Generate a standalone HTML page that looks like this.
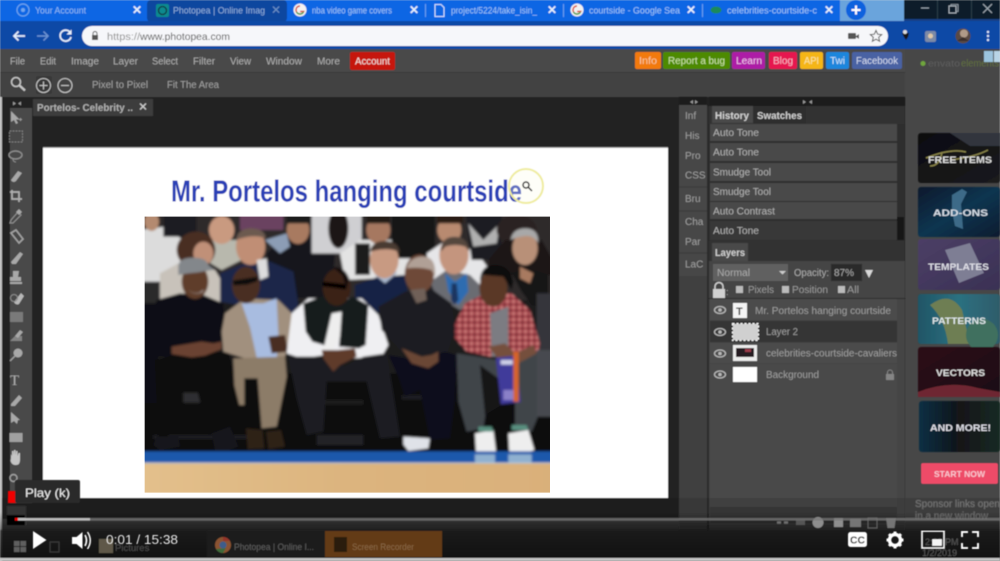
<!DOCTYPE html>
<html><head><meta charset="utf-8"><style>
html,body{margin:0;padding:0;background:#ddd;width:1000px;height:561px;overflow:hidden}
svg{display:block;font-family:"Liberation Sans",sans-serif}
</style></head><body>
<svg xmlns="http://www.w3.org/2000/svg" width="1000" height="561" viewBox="0 0 1000 561">
<defs>
<filter id="b" x="-2%" y="-2%" width="104%" height="104%"><feGaussianBlur stdDeviation="0.55"/></filter>
<filter id="p" x="-2%" y="-2%" width="104%" height="104%"><feGaussianBlur stdDeviation="4"/></filter>
<linearGradient id="fade" x1="0" y1="0" x2="0" y2="1"><stop offset="0" stop-color="#000" stop-opacity="0"/><stop offset=".4" stop-color="#000" stop-opacity=".5"/><stop offset="1" stop-color="#000" stop-opacity=".85"/></linearGradient>
<linearGradient id="floor" x1="0" y1="0" x2="1" y2="0"><stop offset="0" stop-color="#e3c08c"/><stop offset=".5" stop-color="#dcb47e"/><stop offset="1" stop-color="#d9b07a"/></linearGradient>
<linearGradient id="a1" x1="0" y1="0" x2="1" y2="1"><stop offset="0" stop-color="#0d0d10"/><stop offset="1" stop-color="#1b1b1e"/></linearGradient>
<linearGradient id="a2" x1="0" y1="0" x2="1" y2="1"><stop offset="0" stop-color="#08192c"/><stop offset=".5" stop-color="#0d3550"/><stop offset="1" stop-color="#0a1c2f"/></linearGradient>
<linearGradient id="a3" x1="0" y1="0" x2="1" y2="1"><stop offset="0" stop-color="#4c3f66"/><stop offset="1" stop-color="#3a3154"/></linearGradient>
<linearGradient id="a4" x1="0" y1="0" x2="1" y2="0"><stop offset="0" stop-color="#1f5566"/><stop offset=".5" stop-color="#2c7080"/><stop offset="1" stop-color="#2f5c6a"/></linearGradient>
<linearGradient id="a5" x1="0" y1="0" x2="1" y2="1"><stop offset="0" stop-color="#2d0e14"/><stop offset="1" stop-color="#1c1014"/></linearGradient>
<linearGradient id="a6" x1="0" y1="0" x2="1" y2="0"><stop offset="0" stop-color="#0e2f44"/><stop offset=".5" stop-color="#121418"/><stop offset="1" stop-color="#132a24"/></linearGradient>
<pattern id="chk" width="18" height="18" patternUnits="userSpaceOnUse"><rect width="18" height="18" fill="#a8464e"/><rect width="9" height="9" fill="#c97a78"/><rect x="9" y="9" width="9" height="9" fill="#7c2f38"/></pattern>
</defs>
<g filter="url(#b)">
<rect width="1000" height="561" fill="#454545"/>
<!-- tab strip -->
<rect x="0" y="0" width="904" height="22" fill="#0b66e4"/>
<rect x="840" y="0" width="64" height="22" fill="#6ba4dc"/>
<rect x="147" y="0" width="140" height="22" rx="4" fill="#0c479f"/>
<rect x="904" y="0" width="96" height="22" fill="#123f85"/>
<rect x="904" y="0" width="96" height="19" fill="#0f1d2c"/>
<circle cx="23" cy="10" r="6" fill="none" stroke="#6fa6ee" stroke-width="1.200"/><circle cx="23" cy="10" r="2" fill="#6fa6ee"/>
<text x="35" y="13.500" font-size="9.500" fill="#8fbcf4" textLength="51" lengthAdjust="spacingAndGlyphs">Your Account</text>
<text x="132" y="14" font-size="12" font-weight="bold" fill="#e8f1fc">✕</text>
<rect x="156" y="4" width="13" height="13" rx="2" fill="#0b8a8e"/><circle cx="162.500" cy="10.500" r="4" fill="none" stroke="#12343f" stroke-width="1.300"/>
<text x="173" y="13.500" font-size="9.500" fill="#8fb0dc" textLength="92" lengthAdjust="spacingAndGlyphs">Photopea | Online Imag</text>
<text x="271" y="14" font-size="12" fill="#6a90c4">✕</text>
<circle cx="300" cy="10" r="6.500" fill="#f2f2f2"/><path d="M300 6a4 4 0 1 0 3.700 5.500h-3.500" fill="none" stroke="#d9503f" stroke-width="1.500"/><path d="M296.500 12a4 4 0 0 0 7 0" fill="none" stroke="#3aa757" stroke-width="1.300"/>
<text x="312" y="13.500" font-size="9.500" fill="#a0c8f8" textLength="80" lengthAdjust="spacingAndGlyphs">nba video game covers</text>
<text x="409" y="14" font-size="12" font-weight="bold" fill="#e8f1fc">✕</text>
<rect x="425" y="4" width="1" height="13" fill="#6aa2ee"/>
<path d="M435 4.500h6l3 3v9h-9z" fill="none" stroke="#cfe2fb" stroke-width="1.100"/>
<text x="451" y="13.500" font-size="9.500" fill="#a0c8f8" textLength="86" lengthAdjust="spacingAndGlyphs">project/5224/take_isin_</text>
<text x="547" y="14" font-size="12" font-weight="bold" fill="#e8f1fc">✕</text>
<rect x="563" y="4" width="1" height="13" fill="#6aa2ee"/>
<circle cx="577" cy="10" r="6.500" fill="#f2f2f2"/><path d="M577 6a4 4 0 1 0 3.700 5.500h-3.500" fill="none" stroke="#d9503f" stroke-width="1.500"/><path d="M573.500 12a4 4 0 0 0 7 0" fill="none" stroke="#3aa757" stroke-width="1.300"/>
<text x="589" y="13.500" font-size="9.500" fill="#a0c8f8" textLength="91" lengthAdjust="spacingAndGlyphs">courtside - Google Sea</text>
<text x="686" y="14" font-size="12" font-weight="bold" fill="#e8f1fc">✕</text>
<rect x="702" y="4" width="1" height="13" fill="#6aa2ee"/>
<ellipse cx="716" cy="10" rx="5.500" ry="3.500" fill="#1f8a5a"/>
<text x="727" y="13.500" font-size="9.500" fill="#a0c8f8" textLength="90" lengthAdjust="spacingAndGlyphs">celebrities-courtside-c</text>
<text x="824" y="14" font-size="12" font-weight="bold" fill="#e8f1fc">✕</text>
<circle cx="856" cy="10" r="10" fill="#0e62de"/><path d="M856 5.500v9M851.500 10h9" stroke="#fff" stroke-width="2"/>
<rect x="921" y="7.500" width="8" height="1" fill="#9aa5b0"/>
<rect x="949" y="6" width="7" height="7" fill="none" stroke="#a5afb8"/><path d="M951 6v-1.500h7v7h-2" fill="none" stroke="#a5afb8" stroke-width=".8"/>
<path d="M983 4l9 9M992 4l-9 9" stroke="#a5afb8" stroke-width="1"/>
<rect x="937" y="0" width="1" height="19" fill="#2a3a4a"/><rect x="971" y="0" width="1" height="19" fill="#2a3a4a"/>
<!-- toolbar -->
<rect x="0" y="21" width="1000" height="29" fill="#0f48a6"/>
<path d="M25 36H14M18.500 31.500L14 36l4.500 4.500" fill="none" stroke="#e6effc" stroke-width="1.700"/>
<path d="M37 36h11M43.500 31.500L48 36l-4.500 4.500" fill="none" stroke="#6c93d1" stroke-width="1.500"/>
<path d="M70.500 33a5.500 5.500 0 1 0 .5 4" fill="none" stroke="#e6effc" stroke-width="1.700"/><path d="M71.500 29.500v5h-5z" fill="#e6effc"/>
<rect x="82" y="26" width="806" height="20" rx="10" fill="#f6f7fa"/>
<rect x="92" y="35" width="6" height="5" fill="#555"/><path d="M93 35v-1.500a2 2 0 0 1 4 0V35" fill="none" stroke="#555"/>
<text x="107" y="40" font-size="10.500" fill="#8d8d8d" textLength="33" lengthAdjust="spacingAndGlyphs">https://</text>
<text x="140" y="40" font-size="10.500" fill="#555" textLength="90" lengthAdjust="spacingAndGlyphs">www.photopea.com</text>
<rect x="848" y="33" width="8" height="6" rx="1" fill="#555"/><path d="M856 36l3-2v5l-3-2z" fill="#555"/>
<path d="M876 30.500l1.700 3.700 4 .4-3 2.700.9 4-3.600-2.100-3.600 2.100.9-4-3-2.700 4-.4z" fill="none" stroke="#555"/>
<path d="M902 33h7l-1 4-2 3-2-3z" fill="#141414"/><circle cx="905" cy="32" r="2" fill="#ddd"/>
<rect x="925" y="31" width="11" height="11" rx="2" fill="#7c8aa6"/><circle cx="930.500" cy="36" r="2.500" fill="#dfc8a8"/>
<circle cx="963" cy="36" r="7.500" fill="#5a4a42"/><circle cx="964" cy="33.500" r="4" fill="#b09a88"/><path d="M957 41l6-4 6 4z" fill="#3a2e2a"/>
<circle cx="988" cy="32" r="1.200" fill="#dfeafa"/><circle cx="988" cy="36" r="1.200" fill="#dfeafa"/><circle cx="988" cy="40" r="1.200" fill="#dfeafa"/>
<!-- menu bar -->
<rect x="0" y="49" width="905" height="23" fill="#494949"/>
<rect x="0" y="72" width="905" height="1" fill="#393939"/>
<rect x="0" y="73" width="905" height="24" fill="#434343"/>
<rect x="905" y="49" width="95" height="470" fill="#474747"/>
<g font-size="10" fill="#b0b0b0">
<text x="10" y="64.500" textLength="15" lengthAdjust="spacingAndGlyphs">File</text>
<text x="40" y="64.500" textLength="16" lengthAdjust="spacingAndGlyphs">Edit</text>
<text x="71" y="64.500" textLength="28" lengthAdjust="spacingAndGlyphs">Image</text>
<text x="113" y="64.500" textLength="25" lengthAdjust="spacingAndGlyphs">Layer</text>
<text x="152" y="64.500" textLength="26" lengthAdjust="spacingAndGlyphs">Select</text>
<text x="193" y="64.500" textLength="22" lengthAdjust="spacingAndGlyphs">Filter</text>
<text x="230" y="64.500" textLength="21" lengthAdjust="spacingAndGlyphs">View</text>
<text x="266" y="64.500" textLength="36" lengthAdjust="spacingAndGlyphs">Window</text>
<text x="317" y="64.500" textLength="23" lengthAdjust="spacingAndGlyphs">More</text>
</g>
<rect x="350" y="52" width="45" height="18" rx="2" fill="#c6170d"/>
<text x="355" y="64.500" font-size="10" fill="#f4e4e0" textLength="35" lengthAdjust="spacingAndGlyphs">Account</text>
<g font-size="10">
<rect x="635" y="52" width="26" height="17" rx="2" fill="#f27a0c"/><text x="639" y="64" fill="#f7c9a0" textLength="18" lengthAdjust="spacingAndGlyphs">Info</text>
<rect x="663" y="52" width="67" height="17" rx="2" fill="#4d8a06"/><text x="668" y="64" fill="#cfe6a8" textLength="57" lengthAdjust="spacingAndGlyphs">Report a bug</text>
<rect x="732" y="52" width="33" height="17" rx="2" fill="#ad1ba6"/><text x="736" y="64" fill="#f2c8ee" textLength="26" lengthAdjust="spacingAndGlyphs">Learn</text>
<rect x="769" y="52" width="28" height="17" rx="2" fill="#e6174f"/><text x="773" y="64" fill="#f7b8c8" textLength="20" lengthAdjust="spacingAndGlyphs">Blog</text>
<rect x="800" y="52" width="23" height="17" rx="2" fill="#f5b614"/><text x="804" y="64" fill="#fbe7a8" textLength="15" lengthAdjust="spacingAndGlyphs">API</text>
<rect x="826" y="52" width="23" height="17" rx="2" fill="#1d86dc"/><text x="830" y="64" fill="#d2e8fa" textLength="15" lengthAdjust="spacingAndGlyphs">Twi</text>
<rect x="852" y="52" width="50" height="17" rx="2" fill="#4a62a3"/><text x="856" y="64" fill="#d5dcf0" textLength="42" lengthAdjust="spacingAndGlyphs">Facebook</text>
</g>
<circle cx="923" cy="63.500" r="2.500" fill="#6fa53c"/>
<text x="928" y="66.500" font-size="9.500" fill="#5e5e5e" textLength="32" lengthAdjust="spacingAndGlyphs">envato</text>
<text x="961" y="66.500" font-size="10" fill="#62703f" textLength="38" lengthAdjust="spacingAndGlyphs">elements</text>
<rect x="984" y="51" width="9" height="11" fill="#9cc4de"/><rect x="994" y="51" width="6" height="11" fill="#b8d4e6"/>
<!-- zoom toolbar -->
<circle cx="16" cy="82" r="4.500" fill="none" stroke="#c4c4c4" stroke-width="1.500"/><path d="M19.500 85.500l5.500 5" stroke="#c4c4c4" stroke-width="2.200"/>
<rect x="36" y="76" width="16" height="18" rx="2" fill="#383838"/>
<circle cx="43.500" cy="85.500" r="7" fill="none" stroke="#c4c4c4" stroke-width="1.100"/><path d="M43.500 81.500v8M39.500 85.500h8" stroke="#c4c4c4" stroke-width="1.100"/>
<circle cx="65" cy="85.500" r="7" fill="none" stroke="#c4c4c4" stroke-width="1.100"/><path d="M61 85.500h8" stroke="#c4c4c4" stroke-width="1.100"/>
<text x="92" y="88" font-size="10" fill="#a0a0a0" textLength="56" lengthAdjust="spacingAndGlyphs">Pixel to Pixel</text>
<text x="167" y="88" font-size="10" fill="#a0a0a0" textLength="52" lengthAdjust="spacingAndGlyphs">Fit The Area</text>
<!-- workspace -->
<rect x="0" y="97" width="905" height="422" fill="#242424"/>
<rect x="0" y="97" width="2" height="464" fill="#bdbdbd"/>
<rect x="33" y="99" width="120" height="17" fill="#3e3e3e"/>
<text x="37" y="111" font-size="10" font-weight="bold" fill="#b0b0b0" textLength="96" lengthAdjust="spacingAndGlyphs">Portelos- Celebrity ..</text>
<path d="M140 103.500l6 6M146 103.500l-6 6" stroke="#ccc" stroke-width="1.300"/>
<path d="M13 101.500l3 2-3 2zM21 101.500l-3 2 3 2z" fill="#999"/>
<!-- tools -->
<rect x="10" y="108" width="22" height="395" fill="#484848"/>
<g fill="#a8a8a8" stroke="none">
<path d="M11 111l0 11 3-2 2 4 2-1-2-3.500h3.500z"/><path d="M19 119.500h3M20.500 118v3" stroke="#999"/>
<rect x="9.500" y="131" width="13" height="11" fill="none" stroke="#808080" stroke-dasharray="2 1"/>
<ellipse cx="15.500" cy="155" rx="6.500" ry="4" fill="none" stroke="#8e8e8e" stroke-width="1.400"/><path d="M13 159q0 3 3 3" fill="none" stroke="#8e8e8e"/>
<path d="M11 180l7-9 4 2-6 8a3 3 0 0 1-5-1z"/>
<path d="M12 190v9h10M10 192h9v10" fill="none" stroke="#b0b0b0" stroke-width="1.700"/>
<path d="M11 220l7-8 3 3-8 8h-3z" fill="none" stroke="#8e8e8e" stroke-width="1.200"/><path d="M16 212l3-3 3 3-3 3z"/>
<path d="M11 233l5-3 7 9-4 4z" fill="none" stroke="#a0a0a0" stroke-width="1.700"/>
<path d="M11 262l9-10 3 2-7 10h-4z"/>
<path d="M13 271h6l-1 6h3v4h-11v-4h3z"/><rect x="10" y="282" width="12" height="2"/>
<path d="M14 302l7-9 3 3-5 8a3.500 3.500 0 0 1-5-2z" fill="#b8b8b8"/><circle cx="14" cy="298" r="3.500" fill="none" stroke="#8e8e8e"/>
<rect x="10" y="312" width="13" height="10" fill="#7a7a7a"/>
<path d="M10 341l5-5h7v5z" fill="#848484"/><path d="M15 336l5-6 3 2-5 6z"/>
<circle cx="18" cy="353" r="4.500"/><path d="M10 361l5-5" stroke="#a0a0a0" stroke-width="1.400"/>
<text x="10" y="385" font-size="15" font-family="Liberation Serif" fill="#b0b0b0">T</text>
<path d="M11 404l8-9 3 3-7 8h-4z"/>
<path d="M11 412l0 11 3-2 3 3 1-4h2z"/>
<rect x="9.500" y="433" width="13" height="9" fill="#a0a0a0"/>
<path d="M11 458v-4l1 2v-5h1.500v4l.5-5h1.500v5l.5-4h1.500v5l1-3h1.500v7q0 5-4 5h-1q-3 0-4.500-4z" fill="#c4c4c4"/>
<circle cx="13.500" cy="478" r="3.500" fill="none" stroke="#a0a0a0" stroke-width="1.400"/>
</g>
<!-- canvas -->
<rect x="43" y="148" width="625" height="350" fill="#fff"/>
<rect x="43" y="147" width="625" height="1" fill="#999"/>
<text x="171" y="201.500" font-size="31" font-weight="bold" fill="#2c41b6" textLength="351" lengthAdjust="spacingAndGlyphs">Mr. Portelos hanging courtside</text>
<circle cx="526" cy="186" r="17" fill="#fbfbe4" fill-opacity=".25" stroke="#efec9e" stroke-width="2"/>
<circle cx="526" cy="185" r="3" fill="none" stroke="#333" stroke-width="1.500"/><path d="M528 187l4 4" stroke="#333" stroke-width="1.500"/>
</g>
<!-- photo -->
<g transform="translate(140 210) scale(.33333)">
<clipPath id="pc"><rect x="14" y="20" width="1216" height="828"/></clipPath>
<g clip-path="url(#pc)"><g filter="url(#p)">
<rect x="0" y="0" width="1250" height="860" fill="#1c1a1c"/>
<rect x="0" y="0" width="1250" height="270" fill="#2f2a2b"/>
<!-- back row -->
<path d="M0 60l74-10 55 40-10 120-119 10z" fill="#dcdcdc"/>
<ellipse cx="35" cy="35" rx="22" ry="28" fill="#b48a70"/>
<rect x="70" y="0" width="100" height="80" fill="#1e1e22"/>
<path d="M200 90h90l15 60-60 30-50-30z" fill="#b8b8ad"/>
<ellipse cx="245" cy="60" rx="38" ry="42" fill="#c99a80"/>
<rect x="300" y="0" width="130" height="60" fill="#6b4260"/>
<path d="M380 130l60-60h100l45 60-10 130-170 10z" fill="#17171b"/>
<path d="M375 90l65-20 10 40-30 20z" fill="#8c9db5"/>
<ellipse cx="474" cy="60" rx="34" ry="42" fill="#a87a60"/><path d="M440 0h70v40h-70z" fill="#1a1a1a"/>
<path d="M515 0h150v130h-150z" fill="#cfcfd2"/><ellipse cx="595" cy="55" rx="30" ry="60" fill="#1a1416"/>
<path d="M600 130l60-40h100l55 40-10 70-190 10z" fill="#e3e3e3"/><path d="M645 100h45v95h-45z" fill="#1a1a1c"/>
<ellipse cx="715" cy="60" rx="36" ry="42" fill="#a67860"/><path d="M680 0h70v40h-70z" fill="#221a18"/>
<rect x="755" y="0" width="130" height="145" fill="#141417"/>
<path d="M860 130l60-40 90 35 35 50-15 60-160-30z" fill="#e6e6e8"/>
<ellipse cx="928" cy="60" rx="36" ry="40" fill="#b88a70"/><path d="M890 0h80v40h-80z" fill="#2a1f18"/>
<path d="M975 0h110v150h-90z" fill="#1c1c24"/><path d="M985 40l45 50 50-50-10 60-70 10z" fill="#b0b0b0"/>
<ellipse cx="1130" cy="60" rx="60" ry="45" fill="#2c2220"/>
<path d="M1045 150l50-60h110l45 80v25H1050z" fill="#1a1719"/>
<ellipse cx="1155" cy="115" rx="38" ry="50" fill="#b89078"/><path d="M1112 90q5-35 45-35t38 45q-15-25-40-22t-43 12z" fill="#a8a8a8"/>
<rect x="0" y="215" width="64" height="65" fill="#2a2a2c"/>
<!-- row 2 -->
<path d="M60 190l55-30 110 20 30 50-5 45-190 10z" fill="#c8c2ba"/>
<ellipse cx="168" cy="120" rx="58" ry="55" fill="#4a2e24"/><ellipse cx="190" cy="130" rx="30" ry="35" fill="#c09078"/>
<path d="M240 190l100-40 50 5 70 30 15 100-10 30-225-40z" fill="#1a2748"/>
<ellipse cx="332" cy="110" rx="44" ry="55" fill="#c08e74"/><path d="M288 90q5-35 45-35t45 30q-40-15-90 5z" fill="#6c5a50"/>
<path d="M350 150l30-5 5 55-25 10z" fill="#ddd"/>
<path d="M645 225l70-25 80-5 10 60-65 40-60 30-35-40z" fill="#152444"/><path d="M705 195l30 25 35-30v-5l-60 0z" fill="#a8b8ce"/>
<ellipse cx="733" cy="150" rx="43" ry="55" fill="#c89a82"/><path d="M690 125q5-32 45-32t45 35q-30-20-90-3z" fill="#4a3a30"/>
<path d="M870 215l50-35 70 15 40 40-10 45-60 20-70-40z" fill="#6a6c72"/><path d="M915 190l30 25 35-25 5 55-30 40-30-40z" fill="#2d6cb0"/><path d="M935 220h15l5 50-12 15-10-15z" fill="#1a3560"/>
<ellipse cx="942" cy="135" rx="44" ry="58" fill="#c4957e"/><path d="M903 125q0-45 40-45t45 45l-12-15q-30-10-60 0z" fill="#55463e"/>
<path d="M1115 190l50-15 60 20v100l-50-10-30-40z" fill="#161416"/>
<path d="M1140 170l40 20-10 30-30-15z" fill="#a87a60"/>
<rect x="1190" y="250" width="60" height="180" fill="#36363a"/>
<!-- seats -->
<rect x="0" y="490" width="1250" height="235" fill="#08080b"/>
<rect x="0" y="280" width="54" height="300" fill="#101013"/>
<rect x="130" y="548" width="60" height="30" fill="#2e2e32"/>
<rect x="530" y="570" width="140" height="14" fill="#1a1a1e"/>
<rect x="530" y="675" width="140" height="30" fill="#222226"/>
<rect x="785" y="555" width="80" height="14" fill="#1c1c20"/>
<rect x="40" y="675" width="300" height="12" fill="#1e1e22"/>
<!-- man1 -->
<path d="M50 270l70-20 70 5 60 25 5 125-45 35-170 0-15-70z" fill="#101013"/>
<path d="M45 450l80-20 140-5 15 55-5 190-70 5-45-180H100l-15 190H55z" fill="#070709"/>
<path d="M215 670l55-20 25 60-30 10h-40z" fill="#18181c"/><path d="M50 680h65l5 30-60 10-20-15z" fill="#18181c"/>
<path d="M95 410l90-15 35 5 25-5v22l-50 20-40 5-60-10z" fill="#6a4230"/>
<ellipse cx="165" cy="215" rx="40" ry="52" fill="#5e3c2a"/><path d="M145 240q25 20 48-2-5 10-20 12t-28-10z" fill="#ddd"/>
<path d="M115 195l0-30q5-22 45-22t45 22l18 14-50 8q-30 2-58 8z" fill="#83878b"/>
<!-- man2 -->
<path d="M255 310l60-45 100 5 40 40 0 70-20 60-120 5-65-20-5-60z" fill="#a1907e"/>
<path d="M305 280l65 0 40-15 5 110-5 75-60-8-20-90z" fill="#a8bce0"/>
<path d="M280 445l155-5 5 60-30 150-45 5-12-150-40 0 0 80-15 0-15-60z" fill="#8c7b68"/>
<path d="M385 380l50-5 10 50-50 5z" fill="#4a2e22"/>
<path d="M318 655l50 5 5 55-50 3zM378 665l45-5 12 50-50 8z" fill="#2e2118"/>
<ellipse cx="318" cy="225" rx="42" ry="55" fill="#4a2e20"/><path d="M278 212l75-12-2 14-30 10-40 2z" fill="#0e0e0e"/>
<!-- man3 -->
<path d="M440 430l15-120 50-45 160 0 50 50 30 90-20 35-90 5-80-10-70 10z" fill="#efeff2"/>
<path d="M490 280l80-30 45 20 25-10 45 25-8 120-20 10-60-5 5-70-30 10-5 60-50-15-20-30z" fill="#191a1d"/>
<path d="M575 310l30-5-5 75-25 45-25-5z" fill="#eee"/>
<path d="M445 440l80 0 90 30 55-30 70-10 20 120 20 130-60 5-40-170-120 0-10 150-50 10-30-110z" fill="#1a1d24"/>
<path d="M545 420l50 0 50-5 5 25-50 25-20 20-30-40z" fill="#5e3a2a"/>
<path d="M700 690l70-10 20 35-15 15h-70zM455 685l70-5 5 35-60 5z" fill="#0c0c0f"/>
<path d="M790 680l80 5-5 30-60 8-15-20z" fill="#dfe2e8"/>
<ellipse cx="590" cy="232" rx="42" ry="55" fill="#3a2418"/><path d="M548 215l75 8-5 16-30-5-40-5z" fill="#060606"/><path d="M578 172q35-5 50 35l-10 30-10-40z" fill="#141010"/>
<!-- man4 -->
<path d="M715 290l80-45 70-15 70 50 10 75-25 80-60 15-70-20-65-70z" fill="#1f1f23"/>
<path d="M745 435l90 15 80-25 35 10-5 130-15 120-60 5-30-150-45 20-20-60z" fill="#0b0f1a"/>
<path d="M785 415l60 25 30-5 20-10 0 30-30 20-50-15z" fill="#6a4634"/>
<path d="M870 690l70-5 5 30-60 8z" fill="#0c0c0f"/>
<ellipse cx="838" cy="192" rx="44" ry="58" fill="#6e4a38"/><path d="M800 175q10-35 50-35t35 60l-10-20q-35-10-75-5z" fill="#b0a096"/>
<path d="M810 240l45-5 5 35-30 10z" fill="#706058"/>
<!-- man5 -->
<path d="M945 340l30-60 60-30 80 0 55 50 30 100-5 25-70 10-75 5-70-15-35-40z" fill="url(#chk)"/>
<path d="M1050 310l55-20 0 150-50 0z" fill="#7c7c82"/>
<path d="M950 430l60 10 60 10 50 5 75-30 35 20-5 100-50 120-50 0 0-90-80-20-15 100-50 10-25-90z" fill="#3f444a"/>
<path d="M1020 465l55 40 10 80-50 30z" fill="#131315"/>
<path d="M1045 410l50-10 30 30 55-25 10 25-55 30-50 0z" fill="#74503e"/>
<rect x="1075" y="440" width="60" height="140" transform="rotate(-6 1105 510)" fill="#3f3a9a"/>
<rect x="1120" y="425" width="16" height="150" fill="#d6642a"/>
<rect x="1082" y="450" width="36" height="14" fill="#cfd0e8"/><rect x="1090" y="540" width="30" height="30" fill="#8a80c8"/>
<path d="M1005 670l55-10 8 65h-60z" fill="#eeeeee"/><path d="M1015 650h40l5 15h-45z" fill="#5a9080"/>
<path d="M1105 670l60-10 18 60-20 8h-55z" fill="#eeeeee"/><path d="M1115 645h45l5 15h-50z" fill="#5a9080"/>
<ellipse cx="1060" cy="235" rx="42" ry="55" fill="#5a3928"/><path d="M1020 215q0-50 45-50t55 50l-5 25-25-40-60-5z" fill="#0e0c0c"/>
<rect x="1190" y="420" width="60" height="200" fill="#46494f"/>
<!-- floor -->
<rect x="0" y="724" width="1250" height="35" fill="#1c59ab"/>
<path d="M1005 733h60v25h-60zM1105 733h70v25h-70z" fill="#8fb0d0"/>
<rect x="0" y="758" width="1250" height="3" fill="#e6e6e0"/>
<rect x="0" y="761" width="1250" height="100" fill="url(#floor)"/>
</g></g></g>
<g filter="url(#b)">
<!-- mini panel -->
<rect x="679" y="97" width="28" height="9" fill="#1d1d1d"/>
<rect x="709" y="97" width="196" height="9" fill="#1d1d1d"/>
<path d="M693 100l-3 2 3 2zM695 100l3 2-3 2z" fill="#999"/>
<path d="M803 100l3 2-3 2zM812 100l-3 2 3 2z" fill="#999"/>
<rect x="679" y="106" width="28" height="424" fill="#3f3f3f"/>
<rect x="679" y="105" width="28" height="81" fill="#474747"/>
<rect x="679" y="188" width="28" height="22" fill="#474747"/>
<rect x="679" y="212" width="28" height="40" fill="#474747"/>
<rect x="679" y="254" width="28" height="22" fill="#474747"/>
<g font-size="10" fill="#9e9e9e">
<text x="685" y="119">Inf</text><text x="685" y="139">His</text><text x="685" y="159">Pro</text><text x="685" y="178.500">CSS</text>
<text x="685" y="202">Bru</text><text x="685" y="225">Cha</text><text x="685" y="245">Par</text><text x="685" y="267.500">LaC</text>
</g>
<!-- right panels -->
<rect x="707" y="106" width="2" height="424" fill="#2a2a2a"/>
<rect x="709" y="106" width="196" height="18" fill="#333"/>
<rect x="712" y="106" width="41" height="17" fill="#4a4a4a"/>
<rect x="753" y="106" width="53" height="17" fill="#2e2e2e"/>
<text x="715" y="119" font-size="10" font-weight="bold" fill="#d2d2d2" textLength="34" lengthAdjust="spacingAndGlyphs">History</text>
<text x="757" y="119" font-size="10" font-weight="bold" fill="#cfcfcf" textLength="45" lengthAdjust="spacingAndGlyphs">Swatches</text>
<rect x="709" y="124" width="196" height="118" fill="#2f2f2f"/>
<g fill="#484848">
<rect x="710" y="124" width="187" height="17"/><rect x="710" y="143" width="187" height="18"/><rect x="710" y="163" width="187" height="18"/><rect x="710" y="183" width="187" height="18"/><rect x="710" y="202" width="187" height="17"/>
</g>
<rect x="710" y="221" width="187" height="19" fill="#393939"/>
<rect x="897" y="217" width="7" height="23" fill="#161616"/>
<g font-size="10" fill="#b0b0b0">
<text x="713" y="136" textLength="46" lengthAdjust="spacingAndGlyphs">Auto Tone</text>
<text x="713" y="155.500" textLength="46" lengthAdjust="spacingAndGlyphs">Auto Tone</text>
<text x="713" y="175.500" textLength="58" lengthAdjust="spacingAndGlyphs">Smudge Tool</text>
<text x="713" y="195" textLength="58" lengthAdjust="spacingAndGlyphs">Smudge Tool</text>
<text x="713" y="214.500" textLength="62" lengthAdjust="spacingAndGlyphs">Auto Contrast</text>
<text x="713" y="234" textLength="46" lengthAdjust="spacingAndGlyphs">Auto Tone</text>
</g>
<rect x="709" y="241" width="196" height="20" fill="#333"/>
<rect x="712" y="243" width="36" height="18" fill="#4a4a4a"/>
<text x="715" y="256" font-size="10" font-weight="bold" fill="#cfcfcf" textLength="30" lengthAdjust="spacingAndGlyphs">Layers</text>
<rect x="709" y="261" width="196" height="269" fill="#454545"/>
<rect x="713" y="264" width="75" height="17" fill="#606060"/>
<text x="717" y="276" font-size="10" fill="#aaa" textLength="33" lengthAdjust="spacingAndGlyphs">Normal</text>
<path d="M779 271h7l-3.500 3.500z" fill="#ccc"/>
<text x="794" y="276" font-size="10" fill="#aaa" textLength="35" lengthAdjust="spacingAndGlyphs">Opacity:</text>
<rect x="831" y="264" width="31" height="17" fill="#2c2c2c"/>
<text x="834" y="276" font-size="10" fill="#a8a8a8">87%</text>
<path d="M865 270h8l-4 8z" fill="#d8d8d8"/>
<rect x="713" y="289" width="12" height="9" fill="#d0d0d0"/><path d="M715 289v-2.500a4 4 0 0 1 8 0V289" fill="none" stroke="#d0d0d0" stroke-width="1.500"/>
<text x="726" y="295" font-size="9" fill="#aaa">:</text>
<rect x="736" y="286" width="7" height="7" fill="#bbb"/><text x="748" y="293" font-size="10" fill="#999" textLength="26" lengthAdjust="spacingAndGlyphs">Pixels</text>
<rect x="782" y="286" width="7" height="7" fill="#bbb"/><text x="792" y="293" font-size="10" fill="#999" textLength="36" lengthAdjust="spacingAndGlyphs">Position</text>
<rect x="838" y="286" width="7" height="7" fill="#bbb"/><text x="847" y="293" font-size="10" fill="#999" textLength="12" lengthAdjust="spacingAndGlyphs">All</text>
<rect x="709" y="298" width="196" height="1" fill="#2c2c2c"/>
<rect x="710" y="299" width="187" height="21" fill="#4b4b4b"/>
<rect x="710" y="321" width="187" height="21" fill="#353535"/>
<rect x="710" y="343" width="187" height="20" fill="#4b4b4b"/>
<rect x="710" y="364" width="187" height="21" fill="#484848"/>
<rect x="710" y="385" width="187" height="122" fill="#484848"/>
<rect x="710" y="507" width="187" height="16" fill="#3b3b3b"/>
<g fill="none" stroke="#b8b8b8" stroke-width="1.300">
<ellipse cx="720" cy="310" rx="5.500" ry="3.500"/><ellipse cx="720" cy="332" rx="5.500" ry="3.500"/><ellipse cx="720" cy="353.500" rx="5.500" ry="3.500"/><ellipse cx="720" cy="374.500" rx="5.500" ry="3.500"/>
</g>
<g fill="#b8b8b8"><circle cx="720" cy="310" r="1.800"/><circle cx="720" cy="332" r="1.800"/><circle cx="720" cy="353.500" r="1.800"/><circle cx="720" cy="374.500" r="1.800"/></g>
<rect x="733" y="303" width="14" height="15" fill="#f4f4f4"/>
<text x="736" y="315" font-size="11" font-weight="bold" fill="#444">T</text>
<rect x="732.500" y="323.500" width="26" height="17" fill="#d0d0d0" stroke="#111"/>
<rect x="732.500" y="323.500" width="26" height="17" fill="none" stroke="#fff" stroke-dasharray="2 2"/>
<rect x="733" y="345" width="24" height="16" fill="#ececec"/><rect x="736" y="348" width="18" height="9" fill="#251a20"/><rect x="745" y="349" width="6" height="3" fill="#9a3a4a"/>
<rect x="733" y="367" width="24" height="15" fill="#fff"/>
<g font-size="10" fill="#9d9d9d">
<text x="755" y="314" textLength="136" lengthAdjust="spacingAndGlyphs">Mr. Portelos hanging courtside</text>
<text x="766" y="335" textLength="32" lengthAdjust="spacingAndGlyphs">Layer 2</text>
<text x="766" y="356.500" textLength="131" lengthAdjust="spacingAndGlyphs">celebrities-courtside-cavaliers</text>
<text x="766" y="378" textLength="53" lengthAdjust="spacingAndGlyphs">Background</text>
</g>
<rect x="886" y="374" width="8" height="6" fill="#858585"/><path d="M887.500 374v-1.500a2.500 2.500 0 0 1 5 0V374" fill="none" stroke="#858585"/>
<!-- ads -->
<rect x="918" y="133" width="82" height="50" rx="3" fill="url(#a1)"/>
<path d="M925 133h25l20 13h30v-13z" fill="#33363e"/>
<path d="M926 158q25-10 40-6M930 166q10 0 12-14M950 160q25-3 38-10" fill="none" stroke="#8a8548" stroke-width="1.500"/>
<text x="928" y="163" font-size="9" font-weight="bold" fill="#dedede" textLength="64" lengthAdjust="spacingAndGlyphs">FREE ITEMS</text>
<rect x="918" y="187" width="82" height="50" rx="3" fill="url(#a2)"/>
<path d="M952 195l10-6 5 3-6 12 2 25-8-3-3-15z" fill="#3c6a88"/>
<text x="933" y="216" font-size="9" font-weight="bold" fill="#d6dde6" textLength="55" lengthAdjust="spacingAndGlyphs">ADD-ONS</text>
<rect x="918" y="239" width="82" height="51" rx="3" fill="url(#a3)"/>
<path d="M945 250l25-7 14 30-25 10z" fill="#7e7e94"/>
<text x="928" y="270" font-size="9" font-weight="bold" fill="#dedee6" textLength="61" lengthAdjust="spacingAndGlyphs">TEMPLATES</text>
<rect x="918" y="294" width="82" height="50" rx="3" fill="url(#a4)"/>
<path d="M930 305q20-15 32 5l8 34h-22q-3-25-18-39z" fill="#6e7e52"/><circle cx="982" cy="335" r="16" fill="#3f6f5e"/>
<text x="932" y="324" font-size="9" font-weight="bold" fill="#dee6e8" textLength="54" lengthAdjust="spacingAndGlyphs">PATTERNS</text>
<rect x="918" y="347" width="82" height="50" rx="3" fill="url(#a5)"/>
<path d="M918 392q30-12 60-4l22 4v5h-82z" fill="#6e2632"/>
<text x="936" y="376" font-size="9" font-weight="bold" fill="#dedede" textLength="49" lengthAdjust="spacingAndGlyphs">VECTORS</text>
<rect x="919" y="401" width="81" height="51" rx="3" fill="url(#a6)"/>
<text x="930" y="431" font-size="9" font-weight="bold" fill="#dedee6" textLength="61" lengthAdjust="spacingAndGlyphs">AND MORE!</text>
<rect x="921" y="463" width="77" height="21" rx="2" fill="#ee4c68"/>
<text x="934" y="477" font-size="8.500" font-weight="bold" fill="#f8c8d0" textLength="51" lengthAdjust="spacingAndGlyphs">START NOW</text>
<text x="915" y="507" font-size="10" fill="#8f8f8f" textLength="85" lengthAdjust="spacingAndGlyphs">Sponsor links open</text>
<text x="915" y="519" font-size="10" fill="#8a8a8a" textLength="73" lengthAdjust="spacingAndGlyphs">in a new window</text>
<!-- bottom overlays -->
<rect x="2" y="498" width="998" height="63" fill="#111" fill-opacity=".14"/>
<rect x="0" y="512" width="1000" height="49" fill="url(#fade)"/>
<rect x="0" y="530" width="1000" height="28" fill="#0d0d0d" fill-opacity=".55"/>
<rect x="0" y="558" width="1000" height="3" fill="#c4c4c4"/>
<!-- panel bottom icons -->
<g fill="#6e6e6e">
<path d="M777 522.500h4M784 522.500h4" stroke="#6e6e6e" stroke-width="2.500"/>
<rect x="796" y="520" width="9" height="5" fill="#555"/>
<circle cx="818" cy="522.500" r="5.500" fill="#8e8e8e"/>
<rect x="834" y="518" width="9" height="9" fill="#8e8e8e"/>
<rect x="850" y="519" width="11" height="8" fill="#757575"/>
<rect x="868" y="518" width="9" height="10" fill="none" stroke="#5e5e5e"/>
<path d="M886 518h10l-1.500 10h-7z" fill="#757575"/>
</g>
<rect x="7" y="506" width="19" height="19" fill="#333"/>
<rect x="7" y="515" width="18" height="10" fill="#050505"/>
<rect x="8" y="491" width="8" height="12" fill="#f00000"/>
<!-- taskbar faded -->
<g fill="#5e5e5e"><rect x="14" y="541" width="5.500" height="5"/><rect x="20.500" y="541" width="5.500" height="5"/><rect x="14" y="547" width="5.500" height="5"/><rect x="20.500" y="547" width="5.500" height="5"/></g>
<rect x="50" y="542" width="9" height="10" fill="none" stroke="#3a3a3a"/>
<rect x="99" y="539" width="14" height="14" fill="#5e5848"/>
<text x="115" y="551" font-size="9.500" fill="#4e4e4e">Pictures</text>
<rect x="207" y="531" width="118" height="26" fill="#1f1f1f"/>
<circle cx="223" cy="545" r="8" fill="#8a5230"/><path d="M223 537a8 8 0 0 1 7 4h-7z" fill="#93362b"/><path d="M216 549a8 8 0 0 0 7 4l3-5z" fill="#3f6a3a"/><circle cx="223" cy="545" r="3.500" fill="#3d5d8a"/>
<text x="234" y="550" font-size="9.500" fill="#5e5e5e" textLength="80" lengthAdjust="spacingAndGlyphs">Photopea | Online I...</text>
<rect x="325" y="531" width="117" height="26" fill="#643a12"/>
<rect x="334" y="537" width="13" height="15" fill="#2c1c10"/>
<text x="352" y="550" font-size="9.500" fill="#8a6a48" textLength="62" lengthAdjust="spacingAndGlyphs">Screen Recorder</text>
<text x="925" y="545" font-size="9" fill="#5a5a5a">2:00 PM</text>
<text x="922" y="556" font-size="9" fill="#5a5a5a">1/2/2019</text>
<!-- progress -->
<rect x="15" y="518" width="985" height="2.500" fill="#7a7a7a" fill-opacity=".75"/>
<rect x="15" y="518" width="75" height="2.500" fill="#bdbdbd"/>
<rect x="15" y="518" width="3" height="2.500" fill="#e00"/>
<!-- tooltip -->
<rect x="15" y="480" width="65" height="23" rx="2" fill="#2a2a2a"/>
<text x="25" y="497" font-size="12" fill="#f0f0f0" textLength="45" lengthAdjust="spacingAndGlyphs">Play (k)</text>
</g>
<!-- controls -->
<g filter="url(#b)">
<path d="M33 531l13.500 9-13.500 9z" fill="#fff"/>
<path d="M72 537h4.500l6-5v17l-6-5H72z" fill="#fff"/>
<path d="M85 535q3 5 0 11" fill="none" stroke="#fff" stroke-width="1.700"/><path d="M87.500 532q5.500 8.500 0 17" fill="none" stroke="#fff" stroke-width="1.500"/>
<text x="106" y="544" font-size="12.500" fill="#ececec" textLength="72" lengthAdjust="spacingAndGlyphs">0:01 / 15:38</text>
<rect x="848" y="532" width="19" height="15" rx="2.500" fill="#fff"/>
<text x="850" y="543.500" font-size="10" font-weight="bold" fill="#222" textLength="15" lengthAdjust="spacingAndGlyphs">CC</text>
<circle cx="895" cy="540" r="5.500" fill="none" stroke="#fff" stroke-width="3.500"/>
<path d="M895 531.500v3M895 545.500v3M886.500 540h3M900.500 540h3M889 534l2 2M899 544l2 2M889 546l2-2M899 536l2-2" stroke="#fff" stroke-width="3"/>
<rect x="922" y="531" width="22" height="17" fill="none" stroke="#f4f4f4" stroke-width="1.800"/>
<rect x="932" y="539" width="10" height="7" fill="#f4f4f4"/>
<path d="M962 537v-5h6M972 532h6v5M978 543v5h-6M968 548h-6v-5" fill="none" stroke="#fff" stroke-width="2"/>
</g>
</svg>
</body></html>
